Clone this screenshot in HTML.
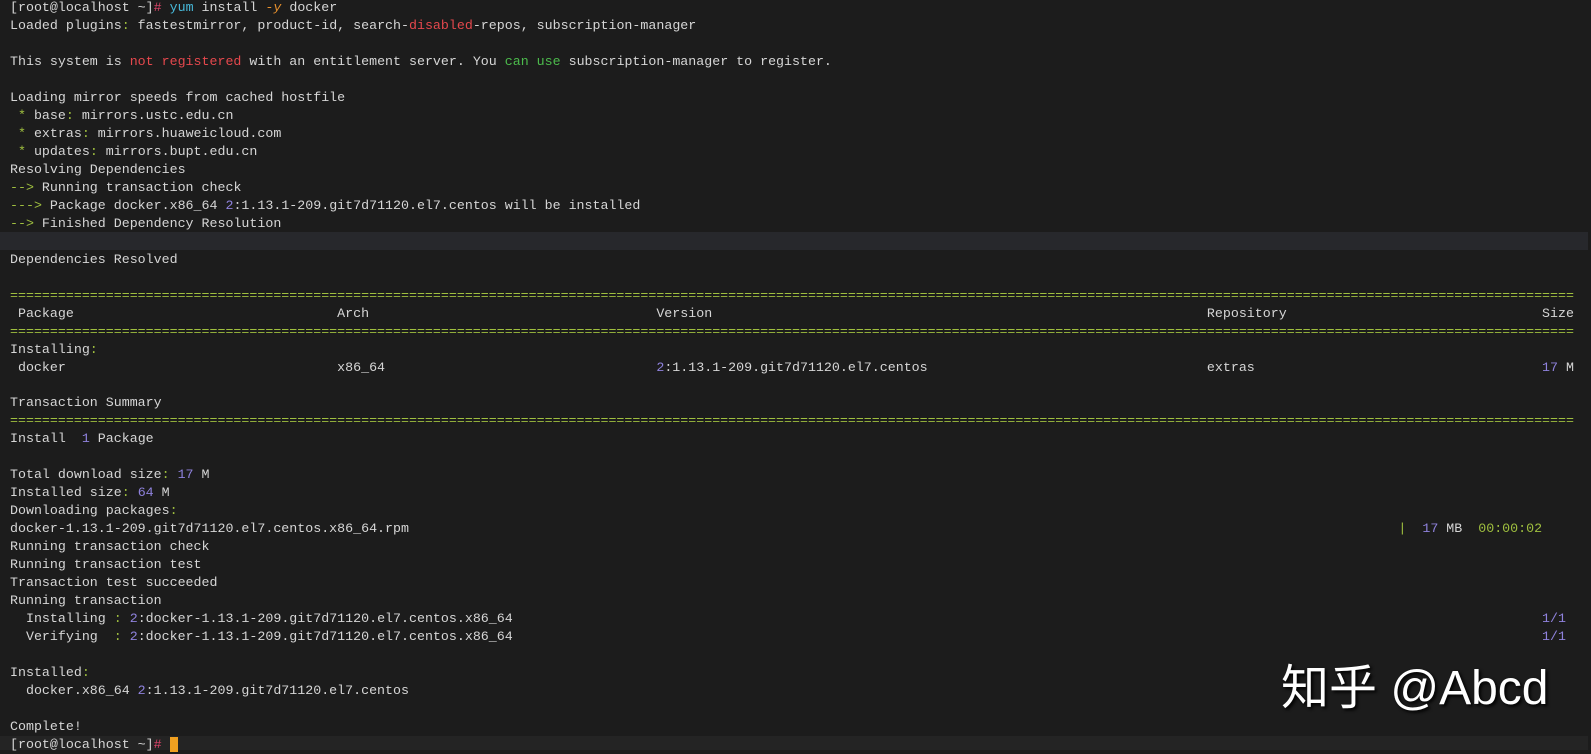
<!DOCTYPE html>
<html><head><meta charset="utf-8"><style>
html,body{margin:0;padding:0;background:#1c1c1c;width:1591px;height:750px;overflow:hidden}
#t{position:absolute;left:10px;top:-0.9px;font-family:"Liberation Mono",monospace;font-size:13.3px;color:#d6d6d6}
.l{position:absolute;left:0;height:17.97px;line-height:17.97px;white-space:pre}
.a{position:absolute;top:0}
.r{color:#e5484d}.g{color:#4cbb4c}.y{color:#9fbf3f}.p{color:#8f82dd}.c{color:#47b8d8}.o{color:#e8912d;font-style:italic}.pk{color:#e0456b}
.hl{position:absolute;left:0;width:1588px;background:#27282c}
#wm{position:absolute;left:1281px;top:648px;font-family:"Liberation Sans","Noto Sans CJK SC",sans-serif;font-size:48px;color:#fff;text-shadow:2px 2px 3px #000;white-space:pre}
</style></head><body>
<div class="hl" style="top:232px;height:18px"></div>
<div class="hl" style="top:736px;height:14px;background:#242424"></div>
<div id="t">
<div class="l" style="top:0px">[root@localhost ~]<span class="pk">#</span> <span class="c">yum</span> install <span class="o">-y</span> docker</div>
<div class="l" style="top:17.97px">Loaded plugins<span class="y">:</span> fastestmirror, product-id, search-<span class="r">disabled</span>-repos, subscription-manager</div>
<div class="l" style="top:53.91px">This system is <span class="r">not registered</span> with an entitlement server. You <span class="g">can use</span> subscription-manager to register.</div>
<div class="l" style="top:89.85px">Loading mirror speeds from cached hostfile</div>
<div class="l" style="top:107.82px"> <span class="y">*</span> base<span class="y">:</span> mirrors.ustc.edu.cn</div>
<div class="l" style="top:125.79px"> <span class="y">*</span> extras<span class="y">:</span> mirrors.huaweicloud.com</div>
<div class="l" style="top:143.76px"> <span class="y">*</span> updates<span class="y">:</span> mirrors.bupt.edu.cn</div>
<div class="l" style="top:161.73px">Resolving Dependencies</div>
<div class="l" style="top:179.7px"><span class="y">--></span> Running transaction check</div>
<div class="l" style="top:197.67px"><span class="y">---></span> Package docker.x86_64 <span class="p">2</span>:1.13.1-209.git7d71120.el7.centos will be installed</div>
<div class="l" style="top:215.64px"><span class="y">--></span> Finished Dependency Resolution</div>
<div class="l" style="top:251.58px">Dependencies Resolved</div>
<div class="l y" style="top:287.52px">====================================================================================================================================================================================================</div>
<div class="l" style="top:305.49px;width:1570px"><span class="a" style="left:1ch">Package</span><span class="a" style="left:41ch">Arch</span><span class="a" style="left:81ch">Version</span><span class="a" style="left:150ch">Repository</span><span class="a" style="left:192ch">Size</span></div>
<div class="l y" style="top:323.46px">====================================================================================================================================================================================================</div>
<div class="l" style="top:341.43px">Installing<span class="y">:</span></div>
<div class="l" style="top:359.4px;width:1570px"><span class="a" style="left:1ch">docker</span><span class="a" style="left:41ch">x86_64</span><span class="a" style="left:81ch"><span class="p">2</span>:1.13.1-209.git7d71120.el7.centos</span><span class="a" style="left:150ch">extras</span><span class="a" style="left:192ch"><span class="p">17</span> M</span></div>
<div class="l" style="top:395.34px">Transaction Summary</div>
<div class="l y" style="top:413.31px">====================================================================================================================================================================================================</div>
<div class="l" style="top:431.28px">Install  <span class="p">1</span> Package</div>
<div class="l" style="top:467.22px">Total download size<span class="y">:</span> <span class="p">17</span> M</div>
<div class="l" style="top:485.19px">Installed size<span class="y">:</span> <span class="p">64</span> M</div>
<div class="l" style="top:503.16px">Downloading packages<span class="y">:</span></div>
<div class="l" style="top:521.13px;width:1570px">docker-1.13.1-209.git7d71120.el7.centos.x86_64.rpm<span class="a" style="left:174ch"><span class="y">|</span>  <span class="p">17</span> MB  <span class="y">00:00:02</span></span></div>
<div class="l" style="top:539.1px">Running transaction check</div>
<div class="l" style="top:557.07px">Running transaction test</div>
<div class="l" style="top:575.04px">Transaction test succeeded</div>
<div class="l" style="top:593.01px">Running transaction</div>
<div class="l" style="top:610.98px;width:1570px">  Installing <span class="y">:</span> <span class="p">2</span>:docker-1.13.1-209.git7d71120.el7.centos.x86_64<span class="a p" style="left:192ch">1/1</span></div>
<div class="l" style="top:628.95px;width:1570px">  Verifying  <span class="y">:</span> <span class="p">2</span>:docker-1.13.1-209.git7d71120.el7.centos.x86_64<span class="a p" style="left:192ch">1/1</span></div>
<div class="l" style="top:664.89px">Installed<span class="y">:</span></div>
<div class="l" style="top:682.86px">  docker.x86_64 <span class="p">2</span>:1.13.1-209.git7d71120.el7.centos</div>
<div class="l" style="top:718.8px">Complete!</div>
<div class="l" style="top:736.77px">[root@localhost ~]<span class="pk">#</span> <span style="background:#f0a020">&nbsp;</span></div>
</div>
<div id="wm">知乎 @Abcd</div>
</body></html>
